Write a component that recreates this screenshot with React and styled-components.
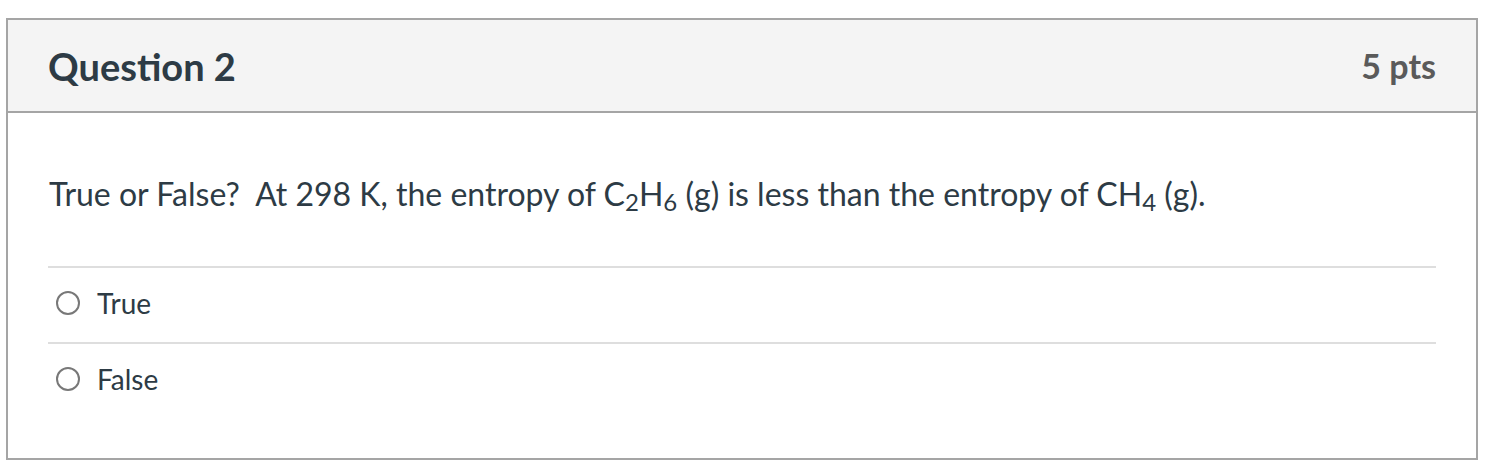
import React from 'react';
import styled, { createGlobalStyle } from 'styled-components';

const GlobalStyle = createGlobalStyle`
  body {
    margin: 0;
    background: #ffffff;
    font-family: 'Lato', 'Open Sans', sans-serif;
    color: #2d3b45;
  }
`;

const Page = styled.div`
  padding: 18px 9px 5px 6px;
`;

const QuestionBox = styled.div`
  border: 2px solid #a5a5a5;
  background: #ffffff;
  height: 442px;
  box-sizing: border-box;
  display: flex;
  flex-direction: column;
`;

const Header = styled.div`
  display: flex;
  align-items: center;
  justify-content: space-between;
  height: 91px;
  padding: 0 40px 0 40px;
  background: #f4f4f4;
  border-bottom: 2px solid #a5a5a5;
`;

const Title = styled.h2`
  margin: 0;
  font-size: 38px;
  font-weight: 700;
  color: #2d3b45;
`;

const Points = styled.div`
  font-size: 34px;
  font-weight: 700;
  color: #5a5a5a;
`;

const Body = styled.div`
  padding: 0 40px 0 40px;
`;

const QuestionText = styled.p`
  margin: 0;
  height: 153px;
  display: flex;
  align-items: center;
  font-size: 32px;
  color: #2d3b45;
  padding-left: 1px;
  padding-top: 8px;
  box-sizing: border-box;
`;

const Sub = styled.sub`
  font-size: 0.75em;
  vertical-align: -0.22em;
  line-height: 0;
`;

const AnswerList = styled.div`
  display: flex;
  flex-direction: column;
`;

const Answer = styled.label`
  display: flex;
  align-items: center;
  gap: 17px;
  border-top: 2px solid #dedede;
  padding-left: 8px;
  padding-bottom: 4px;
  box-sizing: border-box;
  height: 76px;
  font-size: 28px;
  color: #2d3b45;
`;

const Radio = styled.span`
  display: block;
  width: 24px;
  height: 24px;
  min-width: 24px;
  border-radius: 50%;
  border: 2px solid #787878;
  box-sizing: border-box;
  flex-shrink: 0;
`;

export default function App() {
  return (
    <Page>
      <GlobalStyle />
      <QuestionBox>
        <Header>
          <Title>Question 2</Title>
          <Points>5 pts</Points>
        </Header>
        <Body>
          <QuestionText>
            <span>
              True or False?&nbsp; At 298 K, the entropy of C<Sub>2</Sub>H<Sub>6</Sub> (g) is less than the entropy of CH<Sub>4</Sub> (g).
            </span>
          </QuestionText>
          <AnswerList>
            <Answer>
              <Radio />
              True
            </Answer>
            <Answer>
              <Radio />
              False
            </Answer>
          </AnswerList>
        </Body>
      </QuestionBox>
    </Page>
  );
}
